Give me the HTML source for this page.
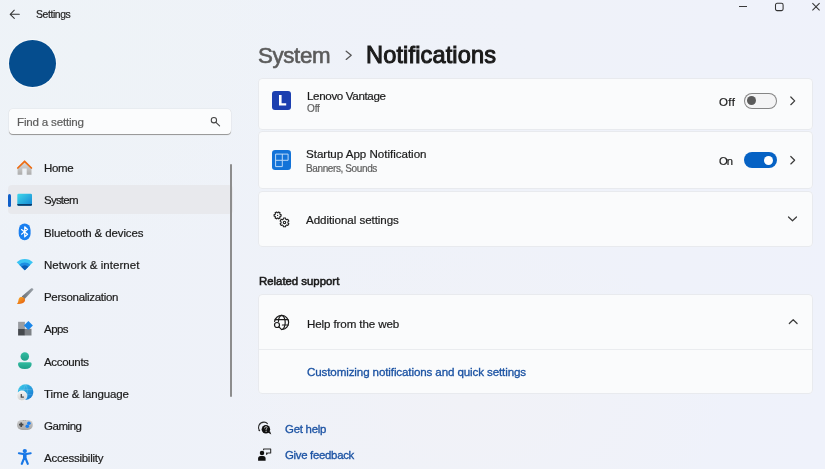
<!DOCTYPE html>
<html><head><meta charset="utf-8"><title>Settings</title>
<style>
html,body{margin:0;padding:0;}
body{width:825px;height:469px;overflow:hidden;position:relative;
background:radial-gradient(ellipse 260px 160px at 470px 400px, rgba(241,242,247,1) 0%, rgba(241,242,247,0) 100%), radial-gradient(ellipse 240px 220px at 90px 50px, rgba(238,243,247,1) 0%, rgba(238,243,247,0) 100%), linear-gradient(100deg,#eef2f8 0%,#eff2f9 60%,#eff2fb 100%);
font-family:"Liberation Sans",sans-serif;}
.t{position:absolute;white-space:nowrap;line-height:1;-webkit-font-smoothing:antialiased;will-change:transform;-webkit-text-stroke:0.2px currentColor;}
.b{position:absolute;}
svg.b{overflow:visible;}
</style></head><body>
<svg class="b" style="left:8px;top:8px" width="14" height="13" viewBox="0 0 14 13"><path d="M2.2 6.3 H11.3 M6.3 2.2 L2.2 6.3 L6.3 10.4" fill="none" stroke="#333" stroke-width="1.05" stroke-linecap="round" stroke-linejoin="round"/></svg>
<div class="t" style="left:36.40px;top:10.00px;font-size:10.4px;color:#1f1f1f;font-weight:400;letter-spacing:-0.399px;-webkit-text-stroke:0.2px #1f1f1f">Settings</div>
<div class="b" style="left:738.50px;top:6.40px;width:8.20px;height:1.10px;background:#3a3a3a"></div>
<svg class="b" style="left:774px;top:2px" width="11" height="10" viewBox="0 0 11 10"><rect x="1.5" y="1.3" width="7.6" height="7.3" rx="1.6" fill="none" stroke="#333" stroke-width="1.05"/></svg>
<svg class="b" style="left:811px;top:2px" width="11" height="10" viewBox="0 0 11 10"><path d="M1.4 1.2 L8.6 8.4 M8.6 1.2 L1.4 8.4" fill="none" stroke="#333" stroke-width="1.05"/></svg>
<div class="b" style="left:8.70px;top:39.80px;width:47.60px;height:47.50px;background:#054d8e;border-radius:50%;box-shadow:0 0 0 0.8px rgba(255,255,255,0.75)"></div>
<div class="b" style="left:9.00px;top:108.80px;width:222.00px;height:25.80px;background:#fbfcfd;border-radius:4px;box-shadow:inset 0 -1px 0 #9a9a9a, 0 0 0 0.6px #e2e5e9"></div>
<div class="t" style="left:17.20px;top:116.00px;font-size:11.6px;color:#5d5d5d;font-weight:400;letter-spacing:-0.201px;-webkit-text-stroke:0.2px #5d5d5d">Find a setting</div>
<svg class="b" style="left:206px;top:112px" width="18" height="18" viewBox="0 0 18 18"><circle cx="7.9" cy="8.2" r="2.65" fill="none" stroke="#444" stroke-width="1.05"/><path d="M9.9 10.3 L13.6 13.9" stroke="#444" stroke-width="1.1" stroke-linecap="round"/></svg>
<div class="b" style="left:8.00px;top:185.40px;width:225.00px;height:28.60px;background:#e8e9ed;border-radius:4px"></div>
<div class="b" style="left:8.30px;top:193.90px;width:2.60px;height:12.70px;background:#0f5fc9;border-radius:2px"></div>
<div class="b" style="left:230.10px;top:164.00px;width:2.20px;height:233.00px;background:#8d8d8d;border-radius:1.2px"></div>
<div class="t" style="left:44.40px;top:163.00px;font-size:11.5px;color:#1b1b1b;font-weight:400;letter-spacing:-0.324px;-webkit-text-stroke:0.2px #1b1b1b">Home</div>
<div class="t" style="left:44.40px;top:195.00px;font-size:11.5px;color:#1b1b1b;font-weight:400;letter-spacing:-0.769px;-webkit-text-stroke:0.2px #1b1b1b">System</div>
<div class="t" style="left:44.40px;top:228.00px;font-size:11.5px;color:#1b1b1b;font-weight:400;letter-spacing:-0.119px;-webkit-text-stroke:0.2px #1b1b1b">Bluetooth &amp; devices</div>
<div class="t" style="left:44.40px;top:260.00px;font-size:11.5px;color:#1b1b1b;font-weight:400;letter-spacing:0.047px;-webkit-text-stroke:0.2px #1b1b1b">Network &amp; internet</div>
<div class="t" style="left:44.40px;top:292.00px;font-size:11.5px;color:#1b1b1b;font-weight:400;letter-spacing:-0.302px;-webkit-text-stroke:0.2px #1b1b1b">Personalization</div>
<div class="t" style="left:44.40px;top:324.00px;font-size:11.5px;color:#1b1b1b;font-weight:400;letter-spacing:-0.540px;-webkit-text-stroke:0.2px #1b1b1b">Apps</div>
<div class="t" style="left:44.40px;top:357.00px;font-size:11.5px;color:#1b1b1b;font-weight:400;letter-spacing:-0.328px;-webkit-text-stroke:0.2px #1b1b1b">Accounts</div>
<div class="t" style="left:44.40px;top:389.00px;font-size:11.5px;color:#1b1b1b;font-weight:400;letter-spacing:-0.108px;-webkit-text-stroke:0.2px #1b1b1b">Time &amp; language</div>
<div class="t" style="left:44.40px;top:421.00px;font-size:11.5px;color:#1b1b1b;font-weight:400;letter-spacing:-0.453px;-webkit-text-stroke:0.2px #1b1b1b">Gaming</div>
<div class="t" style="left:44.40px;top:453.00px;font-size:11.5px;color:#1b1b1b;font-weight:400;letter-spacing:-0.269px;-webkit-text-stroke:0.2px #1b1b1b">Accessibility</div>
<svg class="b" style="left:16px;top:158px" width="18" height="18" viewBox="0 0 18 18"><defs><linearGradient id="hg" x1="0" y1="0" x2="0" y2="1"><stop offset="0" stop-color="#dedede"/><stop offset="1" stop-color="#adadad"/></linearGradient></defs>
<path d="M1.6 9.6 V16.7 H6.3 V10.6 H10.7 V16.7 H15.5 V9.6 L8.6 3.2 Z" fill="url(#hg)"/>
<path d="M1.8 10 L8.6 3.3 L15.4 10" fill="none" stroke="#ee6c12" stroke-width="1.75" stroke-linecap="round" stroke-linejoin="round"/></svg>
<svg class="b" style="left:16px;top:192px" width="18" height="16" viewBox="0 0 18 16"><defs><linearGradient id="sg" x1="0" y1="0" x2="1" y2="1"><stop offset="0" stop-color="#3fd8ea"/><stop offset="1" stop-color="#1485d4"/></linearGradient></defs>
<rect x="1.3" y="1.7" width="14.7" height="12" rx="1.2" fill="url(#sg)"/>
<path d="M1.3 11.9 H16 V12.5 A1.2 1.2 0 0 1 14.8 13.7 H2.5 A1.2 1.2 0 0 1 1.3 12.5 Z" fill="#0b3d6c"/></svg>
<svg class="b" style="left:17px;top:222px" width="16" height="20" viewBox="0 0 16 20"><rect x="1.7" y="1.4" width="11.9" height="16.9" rx="5.9" ry="6.6" fill="#1a7ff0"/>
<path d="M4.5 7.5 L10.6 12.3 L7.7 14.9 V4.8 L10.6 7.4 L4.5 12.2" fill="none" stroke="#fff" stroke-width="1.15" stroke-linejoin="round" stroke-linecap="round"/></svg>
<svg class="b" style="left:16px;top:257px" width="18" height="15" viewBox="0 0 18 15"><path d="M8.8 13.2 L0.67 5.35 A11.3 11.3 0 0 1 16.93 5.35 Z" fill="#3ac4f3"/>
<path d="M8.8 13.2 L3.19 7.78 A7.8 7.8 0 0 1 14.41 7.78 Z" fill="#1c8ee2"/>
<path d="M8.8 13.2 L5.20 9.73 A5.0 5.0 0 0 1 12.40 9.73 Z" fill="#0b5db5"/></svg>
<svg class="b" style="left:16px;top:288px" width="18" height="18" viewBox="0 0 18 18"><defs><linearGradient id="bh" x1="0" y1="0" x2="1" y2="1"><stop offset="0" stop-color="#fbb12a"/><stop offset="1" stop-color="#e2570c"/></linearGradient>
<linearGradient id="bg2" x1="0" y1="0" x2="1" y2="0"><stop offset="0" stop-color="#6a7178"/><stop offset="1" stop-color="#9aa1a8"/></linearGradient></defs>
<path d="M15.3 0.3 Q16.6 -0.2 17.3 1 Q17.5 1.6 17.1 2.1 L8.5 11.3 L5.7 8.6 Z" fill="url(#bg2)"/>
<path d="M5.0 8.9 Q8.7 8.7 9.1 12.0 Q8.7 15.3 4.6 15.8 Q2.5 16.1 0.9 15.7 Q2.2 14.6 2.4 12.4 Q2.8 9.1 5.0 8.9 Z" fill="url(#bh)"/></svg>
<svg class="b" style="left:16px;top:319px" width="18" height="18" viewBox="0 0 18 18"><rect x="2.1" y="2.8" width="6.8" height="7" fill="#9a9da1"/>
<rect x="2.1" y="9.8" width="6.8" height="6.7" fill="#45494d"/>
<rect x="8.9" y="9.8" width="6.6" height="6.7" fill="#7d8185"/>
<path d="M12.4 1.9 L16.9 6.4 L12.4 10.9 L7.9 6.4 Z" fill="#1a86e8"/></svg>
<svg class="b" style="left:16px;top:350px" width="18" height="20" viewBox="0 0 18 20"><defs><linearGradient id="ag" x1="0" y1="0" x2="0" y2="1"><stop offset="0" stop-color="#33bca1"/><stop offset="1" stop-color="#1f9e87"/></linearGradient></defs>
<circle cx="8.8" cy="6.6" r="4.25" fill="url(#ag)"/>
<path d="M3.6 12.3 H14.1 Q15.7 12.3 15.7 13.9 Q15.5 18.9 8.8 18.9 Q2.1 18.9 2.0 13.9 Q2.0 12.3 3.6 12.3 Z" fill="url(#ag)"/></svg>
<svg class="b" style="left:16px;top:383px" width="18" height="18" viewBox="0 0 18 18"><defs><linearGradient id="gg" x1="0" y1="0" x2="1" y2="1"><stop offset="0" stop-color="#3fd0ea"/><stop offset="1" stop-color="#1270d0"/></linearGradient>
<linearGradient id="cg" x1="0" y1="0" x2="0" y2="1"><stop offset="0" stop-color="#f6f6f6"/><stop offset="1" stop-color="#cfcfcf"/></linearGradient></defs>
<circle cx="9.6" cy="9.1" r="7.8" fill="url(#gg)"/>
<g stroke="#ffffff" stroke-opacity="0.22" stroke-width="0.6" fill="none"><path d="M2 6.6 H17.2 M2 11.6 H17.2 M9.6 1.3 Q5.6 9.1 9.6 16.9 M9.6 1.3 Q13.6 9.1 9.6 16.9"/></g>
<circle cx="5.9" cy="12.8" r="5" fill="url(#cg)" stroke="#f8f8f8" stroke-width="0.7"/>
<path d="M5.3 10.9 V14.2 H7.9" fill="none" stroke="#4a4a4a" stroke-width="1.25"/></svg>
<svg class="b" style="left:16px;top:418px" width="18" height="14" viewBox="0 0 18 14"><defs><linearGradient id="pg" x1="0" y1="0" x2="0" y2="1"><stop offset="0" stop-color="#cdcdcd"/><stop offset="1" stop-color="#a6a6a6"/></linearGradient></defs>
<rect x="1" y="1.9" width="15.8" height="10" rx="5" fill="url(#pg)"/>
<path d="M5.2 4.5 V8.9 M3.0 6.7 H7.4" stroke="#474747" stroke-width="1.7"/>
<circle cx="7.2" cy="2.6" r="0.45" fill="#666"/><circle cx="9.1" cy="2.6" r="0.45" fill="#666"/>
<circle cx="12.9" cy="5.2" r="1.8" fill="#1a7ff0"/><circle cx="11.3" cy="8.3" r="1.8" fill="#1a7ff0"/></svg>
<svg class="b" style="left:16px;top:447px" width="18" height="20" viewBox="0 0 18 20"><circle cx="8.8" cy="4.1" r="2.15" fill="#1877e6"/>
<path d="M2.9 6.3 L8.8 7.3 L14.7 6.3" fill="none" stroke="#1877e6" stroke-width="2.1" stroke-linecap="round" stroke-linejoin="round"/>
<path d="M7.0 7.2 H10.6 V12.4 Q10.6 13 10 13 H7.6 Q7.0 13 7.0 12.4 Z" fill="#1877e6"/>
<path d="M7.7 12.2 L5.8 16.8 M9.9 12.2 L11.8 16.8" fill="none" stroke="#1877e6" stroke-width="2.2" stroke-linecap="round"/></svg>
<div class="t" style="left:258.20px;top:45.00px;font-size:22.3px;color:#5b5b5b;font-weight:400;letter-spacing:-0.369px;-webkit-text-stroke:0.6px #5b5b5b">System</div>
<svg class="b" style="left:344px;top:49px" width="10" height="12" viewBox="0 0 10 12"><path d="M2.2 2.2 L7.2 6.3 L2.2 10.4" fill="none" stroke="#555" stroke-width="1.3" stroke-linecap="round" stroke-linejoin="round"/></svg>
<div class="t" style="left:365.50px;top:44.00px;font-size:23.6px;color:#1a1a1a;font-weight:400;letter-spacing:0.124px;-webkit-text-stroke:1.0px #1a1a1a">Notifications</div>
<div class="b" style="left:258.00px;top:78.00px;width:555.00px;height:52.00px;background:#fafbfc;border-radius:4.5px;box-shadow:inset 0 0 0 1px #e8eaee"></div>
<div class="b" style="left:258.00px;top:131.00px;width:555.00px;height:58.00px;background:#fafbfc;border-radius:4.5px;box-shadow:inset 0 0 0 1px #e8eaee"></div>
<div class="b" style="left:258.00px;top:191.00px;width:555.00px;height:56.00px;background:#fafbfc;border-radius:4.5px;box-shadow:inset 0 0 0 1px #e8eaee"></div>
<div class="b" style="left:258.00px;top:294.00px;width:555.00px;height:100.00px;background:#fafbfc;border-radius:4.5px;box-shadow:inset 0 0 0 1px #e8eaee"></div>
<div class="b" style="left:259.00px;top:349.00px;width:553.00px;height:1.00px;background:#eaecef"></div>
<div class="b" style="left:272.10px;top:90.80px;width:19.20px;height:19.40px;background:#1c3fb0;border-radius:3px"></div>
<svg class="b" style="left:272px;top:90px" width="20" height="21" viewBox="0 0 20 21"><path d="M7.0 5 H9.6 V13.2 H14.2 V15.4 H7.0 Z" fill="#fff"/></svg>
<div class="t" style="left:306.70px;top:90.00px;font-size:11.6px;color:#1b1b1b;font-weight:400;letter-spacing:-0.353px;-webkit-text-stroke:0.2px #1b1b1b">Lenovo Vantage</div>
<div class="t" style="left:306.50px;top:104.00px;font-size:10.0px;color:#5f5f5f;font-weight:400;letter-spacing:-0.136px;-webkit-text-stroke:0.2px #5f5f5f">Off</div>
<div class="t" style="left:719.00px;top:97.00px;font-size:11.5px;color:#1b1b1b;font-weight:400;letter-spacing:0.422px;-webkit-text-stroke:0.2px #1b1b1b">Off</div>
<div class="b" style="left:744.30px;top:93.20px;width:32.40px;height:15.40px;background:#f4f4f5;border-radius:8px;box-shadow:inset 0 0 0 1px #858585"></div>
<div class="b" style="left:747.20px;top:96.30px;width:9.20px;height:9.20px;background:#5b5b5b;border-radius:50%"></div>
<svg class="b" style="left:788px;top:96px" width="10" height="10" viewBox="0 0 10 10"><path d="M2.8 1.0 L6.7 4.85 L2.8 8.7" fill="none" stroke="#3a3a3a" stroke-width="1.2" stroke-linecap="round" stroke-linejoin="round"/></svg>
<div class="b" style="left:272.10px;top:150.20px;width:19.20px;height:19.40px;background:#1373d8;border-radius:3.2px"></div>
<svg class="b" style="left:272px;top:150px" width="20" height="20" viewBox="0 0 20 20"><path d="M3.6 4.1 H16.1 V10.3 H10.3 V16.6 H3.6 Z M10.3 4.1 V10.3 M3.6 10.3 H10.3" fill="none" stroke="#cfe4fb" stroke-width="0.9"/></svg>
<div class="t" style="left:306.40px;top:148.00px;font-size:11.6px;color:#1b1b1b;font-weight:400;letter-spacing:-0.029px;-webkit-text-stroke:0.2px #1b1b1b">Startup App Notification</div>
<div class="t" style="left:306.40px;top:164.00px;font-size:10.0px;color:#5f5f5f;font-weight:400;letter-spacing:-0.387px;-webkit-text-stroke:0.2px #5f5f5f">Banners, Sounds</div>
<div class="t" style="left:719.00px;top:156.00px;font-size:11.3px;color:#1b1b1b;font-weight:400;letter-spacing:-1.062px;-webkit-text-stroke:0.2px #1b1b1b">On</div>
<div class="b" style="left:744.30px;top:152.20px;width:32.40px;height:16.10px;background:#0662c4;border-radius:8px"></div>
<div class="b" style="left:763.90px;top:155.60px;width:9.60px;height:9.60px;background:#fff;border-radius:50%"></div>
<svg class="b" style="left:788px;top:155px" width="10" height="10" viewBox="0 0 10 10"><path d="M2.8 1.45 L6.65 5.2 L2.8 8.95" fill="none" stroke="#3a3a3a" stroke-width="1.2" stroke-linecap="round" stroke-linejoin="round"/></svg>
<svg class="b" style="left:272px;top:210px" width="20" height="20" viewBox="0 0 20 20"><g fill="none" stroke="#1f1f1f" stroke-width="1.1" stroke-linejoin="round">
<path d="M8.17 4.43 L9.10 4.56 L9.10 6.24 L8.17 6.37 L7.73 7.14 L8.08 8.01 L6.62 8.85 L6.04 8.11 L5.16 8.11 L4.58 8.85 L3.12 8.01 L3.47 7.14 L3.03 6.37 L2.10 6.24 L2.10 4.56 L3.03 4.43 L3.47 3.66 L3.12 2.79 L4.58 1.95 L5.16 2.69 L6.04 2.69 L6.62 1.95 L8.08 2.79 L7.73 3.66 Z"/><circle cx="5.6" cy="5.4" r="0.6" fill="#1f1f1f" stroke="none"/>
<path d="M11.28 9.17 L11.44 7.98 L13.56 7.98 L13.72 9.17 L14.69 9.73 L15.80 9.27 L16.86 11.11 L15.90 11.84 L15.90 12.96 L16.86 13.69 L15.80 15.53 L14.69 15.07 L13.72 15.63 L13.56 16.82 L11.44 16.82 L11.28 15.63 L10.31 15.07 L9.20 15.53 L8.14 13.69 L9.10 12.96 L9.10 11.84 L8.14 11.11 L9.20 9.27 L10.31 9.73 Z"/><circle cx="12.5" cy="12.4" r="1.2"/></g></svg>
<div class="t" style="left:306.30px;top:214.00px;font-size:11.6px;color:#1b1b1b;font-weight:400;letter-spacing:-0.066px;-webkit-text-stroke:0.2px #1b1b1b">Additional settings</div>
<svg class="b" style="left:787px;top:214px" width="12" height="10" viewBox="0 0 12 10"><path d="M1.5 3.0 L5.5 6.8 L9.5 3.0" fill="none" stroke="#3a3a3a" stroke-width="1.2" stroke-linecap="round" stroke-linejoin="round"/></svg>
<div class="t" style="left:259.20px;top:276.00px;font-size:11.4px;color:#1a1a1a;font-weight:400;letter-spacing:-0.009px;-webkit-text-stroke:0.55px #1a1a1a">Related support</div>
<svg class="b" style="left:272px;top:313px" width="20" height="20" viewBox="0 0 20 20"><g fill="none" stroke="#1a1a1a" stroke-width="1.2" stroke-linecap="round">
<path d="M2.6 8.4 A7.05 7.05 0 1 1 10.4 16.5"/>
<path d="M3.2 6.6 H16.0 M10.4 12.0 H16.2"/>
<path d="M9.6 2.45 A3.6 7.05 0 0 1 9.6 16.55 M9.6 2.45 A3.6 7.05 0 0 0 6.4 8.4"/>
<circle cx="5.0" cy="12.0" r="2.5"/><path d="M6.9 13.9 L9.4 16.4"/></g></svg>
<div class="t" style="left:307.00px;top:318.00px;font-size:11.6px;color:#1b1b1b;font-weight:400;letter-spacing:-0.111px;-webkit-text-stroke:0.2px #1b1b1b">Help from the web</div>
<svg class="b" style="left:787px;top:317px" width="12" height="10" viewBox="0 0 12 10"><path d="M2.3 6.5 L6.2 2.7 L10.1 6.5" fill="none" stroke="#3a3a3a" stroke-width="1.2" stroke-linecap="round" stroke-linejoin="round"/></svg>
<div class="t" style="left:307.20px;top:366.00px;font-size:11.6px;color:#1c53a3;font-weight:400;letter-spacing:-0.120px;-webkit-text-stroke:0.32px #1c53a3">Customizing notifications and quick settings</div>
<svg class="b" style="left:256px;top:419px" width="18" height="18" viewBox="0 0 18 18"><path d="M3.3 11.4 Q1.9 9.0 2.9 6.4 Q4.3 3.3 7.9 3.1 Q10.2 3.0 11.4 4.6" fill="none" stroke="#2a2a2a" stroke-width="1.1" stroke-linecap="round"/>
<path d="M2.3 11.0 L4.4 10.9 L3.5 12.4 Z" fill="#2a2a2a"/>
<circle cx="9.9" cy="10.2" r="4.25" fill="#111"/><path d="M11.9 13.6 L15.3 15.6 L13.9 11.9 Z" fill="#111"/>
<path d="M8.6 8.9 Q8.7 7.5 9.9 7.5 Q11.1 7.5 11.1 8.6 Q11.1 9.4 10.1 9.9 V10.9" fill="none" stroke="#c8c8c8" stroke-width="0.9" stroke-linecap="round"/>
<circle cx="10.1" cy="12.4" r="0.55" fill="#c8c8c8"/></svg>
<div class="t" style="left:285.30px;top:424.00px;font-size:11.4px;color:#1c53a3;font-weight:400;letter-spacing:-0.232px;-webkit-text-stroke:0.32px #1c53a3">Get help</div>
<svg class="b" style="left:256px;top:445px" width="18" height="18" viewBox="0 0 18 18"><circle cx="6.0" cy="7.9" r="2.25" fill="#111"/>
<path d="M2.1 15.7 V13.6 Q2.1 11.1 4.6 11.1 H7.1 Q9.6 11.1 9.6 13.6 V15.7 Z" fill="#111"/>
<path d="M7.6 5.3 V3.9 H14.7 V8.0 H11.6 L10.6 9.4 V8.0 H10.0" fill="none" stroke="#2a2a2a" stroke-width="1.05" stroke-linejoin="round"/></svg>
<div class="t" style="left:285.30px;top:450.00px;font-size:11.4px;color:#1c53a3;font-weight:400;letter-spacing:-0.296px;-webkit-text-stroke:0.32px #1c53a3">Give feedback</div>

</body></html>
